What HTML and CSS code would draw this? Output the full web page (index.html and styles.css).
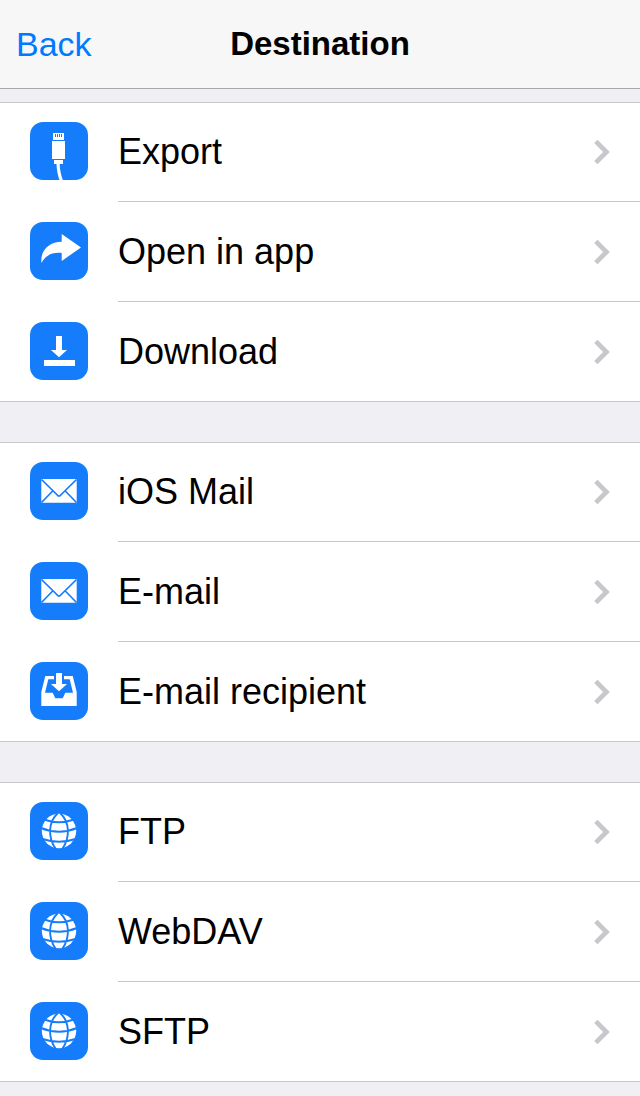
FILE: index.html
```html
<!DOCTYPE html>
<html lang="en">
<head>
<meta charset="utf-8">
<meta name="viewport" content="width=device-width, initial-scale=1">
<title>Destination</title>
<link rel="stylesheet" href="styles.css">
</head>
<body>
<svg class="sprite" aria-hidden="true">
  <symbol id="cable" viewBox="0 0 58 58">
    <path fill="#fff" d="M23 11h11v7H23zM22 19h13v18H22zM24 38h9v4H24z"/>
    <path fill="none" stroke="#fff" stroke-width="3.2" d="M28 41C28.300 48 29 53 31.500 59"/>
    <path stroke="#157dfb" d="M25.500 12v3M27.500 12v3M29.500 12v3M31.500 12v3"/>
  </symbol>
  <symbol id="share" viewBox="0 0 58 58">
    <path fill="#fff" d="M31.700 12L51 25.400 31.700 39V31C22 30 15 33.500 11.500 41 10 28 19 20 31.700 19.700z"/>
  </symbol>
  <symbol id="download" viewBox="0 0 58 58">
    <path fill="#fff" d="M26 14h6v14h5l-8 7.300-8-7.300h5zM14 38h31v6H14z"/>
  </symbol>
  <symbol id="mail" viewBox="0 0 58 58">
    <path fill="#fff" d="M11.300 17h35.400v23.700H11.300z"/>
    <path fill="none" stroke="#157dfb" stroke-width="1.700" d="M11.500 17.500L27 32.700Q29 35.500 31 32.700L46.500 17.500M11.500 40.500L22.700 29M46.500 40.500L35.300 29"/>
  </symbol>
  <symbol id="inbox" viewBox="0 0 58 58">
    <path fill="#fff" d="M15.300 14H24v3.300h-5.700L15 30.700h7.700L25.300 36.300h7.400L35.300 30.700H43L39.700 17.300H34V14h8.700L46.700 30v14H11.300V30z"/>
    <path fill="#fff" d="M26 11h6v11h5l-8 7.300L21 22h5z"/>
  </symbol>
  <symbol id="globe" viewBox="0 0 58 58">
    <circle cx="29" cy="29" r="17.200" fill="#fff"/>
    <path fill="none" stroke="#157dfb" stroke-width="1.900" d="M14 17.500Q29 23 44 17.500M11 26Q29 33.500 47 26M12.500 37Q29 42.500 45.500 37M27.500 11.500C18 20 18 36 25.500 46.500M30.500 11.500C40 20 40 36 32.500 46.500"/>
  </symbol>
  <symbol id="chevron" viewBox="0 0 16 26">
    <path fill="none" stroke="#c7c7cc" stroke-width="4.700" d="M1.800 2.300L12.500 13 1.800 23.700"/>
  </symbol>
</svg>

<header class="navbar">
  <a class="back" href="#">Back</a>
  <h1 class="title">Destination</h1>
</header>

<main class="groups">
  <ul class="group">
    <li><a class="row" href="#"><svg class="icon"><use href="#cable"/></svg><span class="cell"><span>Export</span><svg class="chevron"><use href="#chevron"/></svg></span></a></li>
    <li><a class="row" href="#"><svg class="icon"><use href="#share"/></svg><span class="cell"><span>Open in app</span><svg class="chevron"><use href="#chevron"/></svg></span></a></li>
    <li><a class="row" href="#"><svg class="icon"><use href="#download"/></svg><span class="cell"><span>Download</span><svg class="chevron"><use href="#chevron"/></svg></span></a></li>
  </ul>
  <ul class="group">
    <li><a class="row" href="#"><svg class="icon"><use href="#mail"/></svg><span class="cell"><span>iOS Mail</span><svg class="chevron"><use href="#chevron"/></svg></span></a></li>
    <li><a class="row" href="#"><svg class="icon"><use href="#mail"/></svg><span class="cell"><span>E-mail</span><svg class="chevron"><use href="#chevron"/></svg></span></a></li>
    <li><a class="row" href="#"><svg class="icon"><use href="#inbox"/></svg><span class="cell"><span>E-mail recipient</span><svg class="chevron"><use href="#chevron"/></svg></span></a></li>
  </ul>
  <ul class="group">
    <li><a class="row" href="#"><svg class="icon"><use href="#globe"/></svg><span class="cell"><span>FTP</span><svg class="chevron"><use href="#chevron"/></svg></span></a></li>
    <li><a class="row" href="#"><svg class="icon"><use href="#globe"/></svg><span class="cell"><span>WebDAV</span><svg class="chevron"><use href="#chevron"/></svg></span></a></li>
    <li><a class="row" href="#"><svg class="icon"><use href="#globe"/></svg><span class="cell"><span>SFTP</span><svg class="chevron"><use href="#chevron"/></svg></span></a></li>
  </ul>
</main>
</body>
</html>
```
FILE: styles.css
```css
* {
  box-sizing: border-box;
}

body {
  margin: 0;
  background: #efeff4;
  color: #000;
  font-family: "Liberation Sans", Arial, sans-serif;
}

.sprite {
  display: none;
}

.navbar {
  display: grid;
  grid-template-columns: 1fr auto 1fr;
  align-items: center;
  padding: 24px 16px;
  background: #f7f7f7;
  border-bottom: 1px solid #a7a7aa;
  font-size: 34px;
  line-height: 40px;
}

.back {
  color: #007aff;
  text-decoration: none;
}

.title {
  margin: 0;
  font-size: 33px;
  font-weight: 700;
}

.groups {
  display: flex;
  flex-direction: column;
  gap: 40px;
  padding: 13px 0;
}

.group {
  margin: 0;
  padding: 0;
  list-style: none;
  background: #fff;
  box-shadow: inset 0 1px #c8c7cc;
  border-bottom: 1px solid #c8c7cc;
}

.row {
  display: flex;
  gap: 30px;
  padding-left: 30px;
  color: inherit;
  text-decoration: none;
}

.icon {
  flex: none;
  width: 58px;
  height: 58px;
  margin-top: 20px;
  border-radius: 13px;
  background: #157dfb;
}

.cell {
  flex: 1;
  display: flex;
  align-items: center;
  justify-content: space-between;
  padding: 30px 30px 29px 0;
  border-bottom: 1px solid #c8c7cc;
  font-size: 36px;
  line-height: 40px;
}

li:last-child .cell {
  border-bottom: 0;
}

.chevron {
  flex: none;
  width: 16px;
  height: 26px;
}
```
